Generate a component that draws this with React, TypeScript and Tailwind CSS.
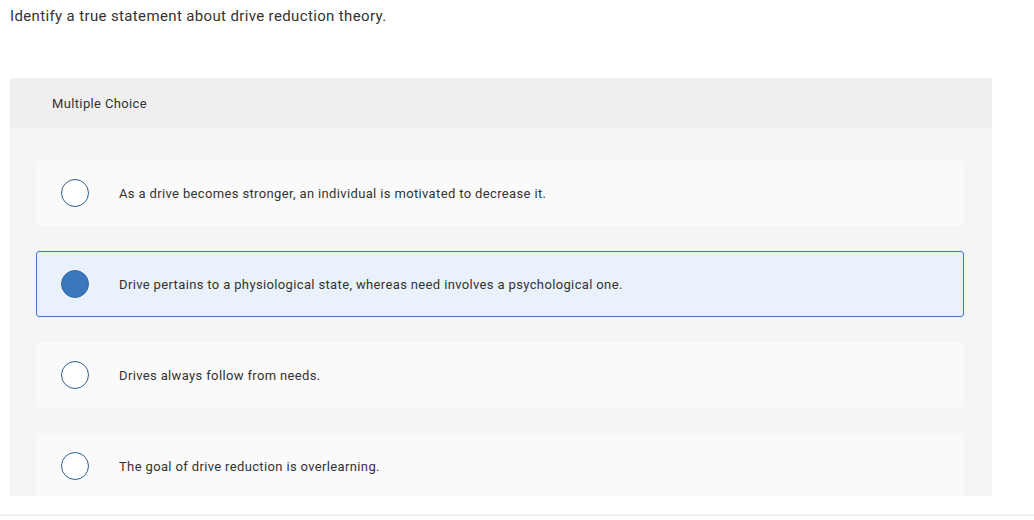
import React from 'react';

const options = [
  'As a drive becomes stronger, an individual is motivated to decrease it.',
  'Drive pertains to a physiological state, whereas need involves a psychological one.',
  'Drives always follow from needs.',
  'The goal of drive reduction is overlearning.',
];

const selected = 1;

export default function App() {
  return (
    <div className="h-[520px] w-[1034px] overflow-hidden bg-white font-['Roboto',sans-serif] tracking-[0.36px] text-[#333]">
      <div className="h-[516px] overflow-hidden border-b-2 border-[#f0f0f0]">
        <h1 className="px-[10px] pt-[6px] text-[15px] leading-[20px]">
          Identify a true statement about drive reduction theory.
        </h1>

        <div className="ml-[10px] mt-[52px] h-[418px] w-[982px] overflow-hidden rounded-t-[3px] bg-[#f5f5f5]">
          <div className="flex h-[50px] items-center bg-[#efefef] px-[42px] pt-[1px] text-[13px]">
            Multiple Choice
          </div>

          <div className="flex flex-col gap-[25px] pl-[26px] pr-[28px] pt-[32px]">
            {options.map((text, i) => {
              const isSel = i === selected;
              return (
                <div
                  key={i}
                  className={
                    isSel
                      ? 'flex h-[66px] shrink-0 items-center rounded-[3px] border border-[#3b78c0] bg-[#e9f1fb] pl-[24px]'
                      : 'flex h-[66px] shrink-0 items-center rounded-[3px] border border-transparent bg-[#fafafa] pl-[24px]'
                  }
                >
                  <span
                    className={
                      isSel
                        ? 'h-[28px] w-[28px] shrink-0 rounded-full border-[1.5px] border-[#2f6aa8] bg-[#3a78bd]'
                        : 'h-[28px] w-[28px] shrink-0 rounded-full border-[1.5px] border-[#2f5f8f] bg-white'
                    }
                  />
                  <span className="ml-[30px] pt-[1px] text-[13px]">{text}</span>
                </div>
              );
            })}
          </div>
        </div>
      </div>
    </div>
  );
}
